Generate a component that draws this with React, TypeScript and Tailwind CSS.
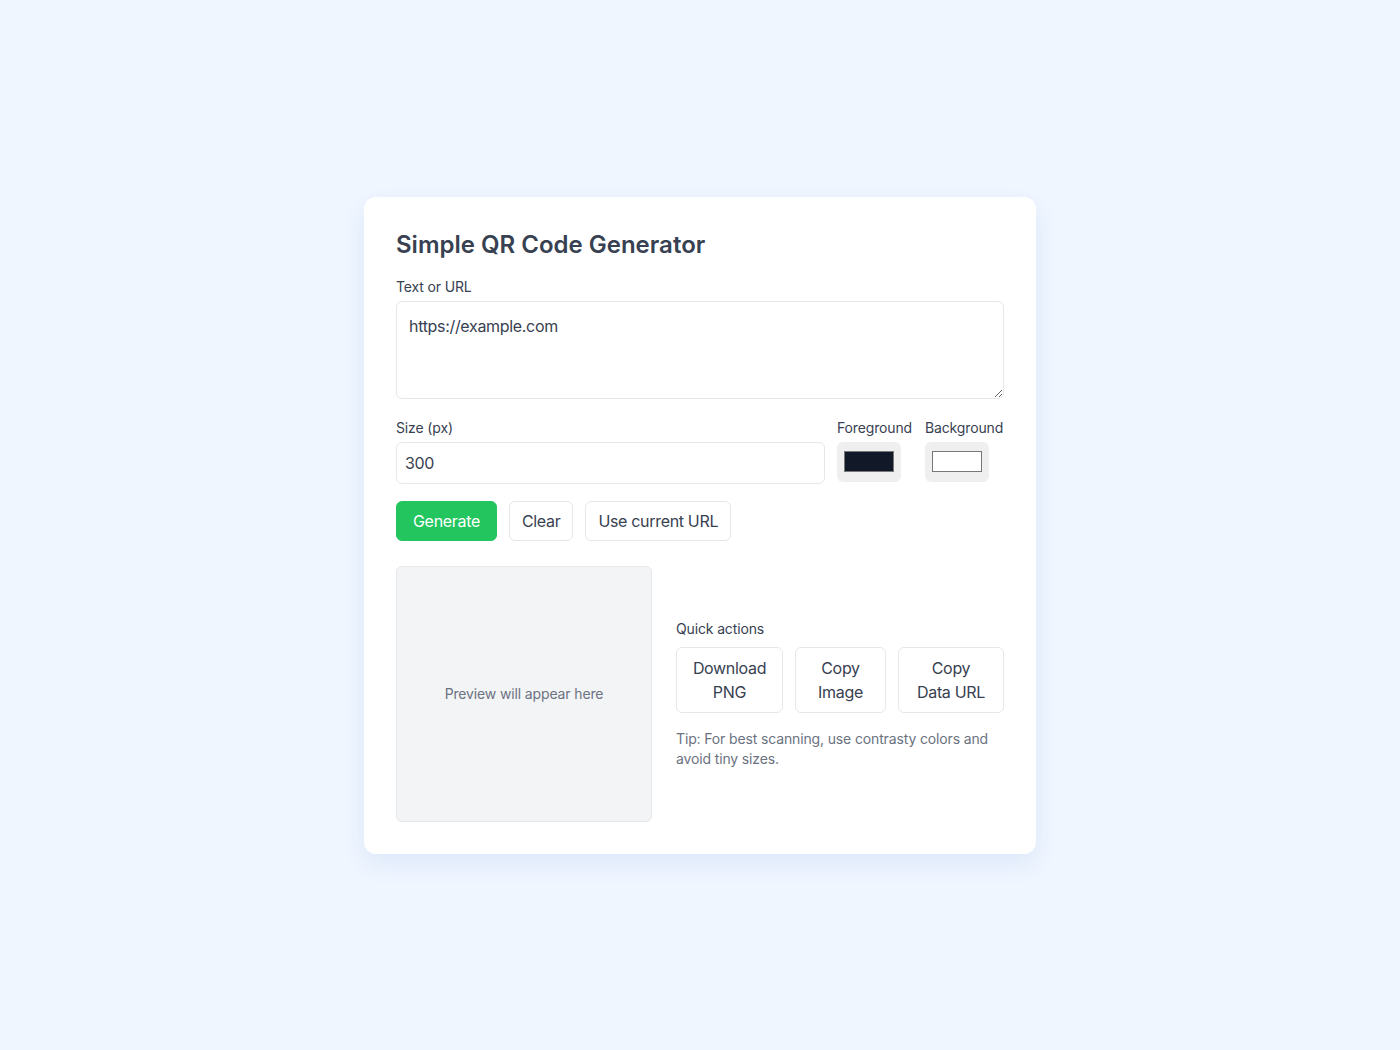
const App = () => {
  return (
    <div
      className="min-h-screen w-full bg-[#eff6ff] flex items-center justify-center tracking-[-0.02em]"
      style={{ fontFamily: "Inter, 'Noto Sans', sans-serif" }}
    >
      <div className="w-[672px] bg-white rounded-xl p-8 shadow-[0_10px_25px_rgba(30,64,175,0.08)]">
        {/* Header */}
        <h1 className="text-2xl leading-8 font-semibold text-[#374151] tracking-normal">
          Simple QR Code Generator
        </h1>

        {/* Text input */}
        <label className="block mt-4 mb-1 text-sm text-[#374151] tracking-[-0.01em]">Text or URL</label>
        <textarea
          rows={3}
          defaultValue="https://example.com"
          className="block w-full h-[98px] px-3 py-3 text-base leading-6 text-[#374151] border border-[#e5e7eb] rounded-md resize-y outline-none"
        />

        {/* Size + colours */}
        <div className="mt-[19px] grid grid-cols-[1fr_76px_79px] gap-3">
          <div>
            <label className="block mb-1 text-sm text-[#374151] tracking-[-0.01em]">Size (px)</label>
            <input
              type="text"
              defaultValue="300"
              className="block w-full h-[42px] px-2 text-base text-[#374151] border border-[#e5e7eb] rounded-md outline-none"
            />
          </div>
          <div>
            <label className="block mb-1 text-sm text-[#374151] tracking-[-0.01em] whitespace-nowrap">Foreground</label>
            <div className="w-16 h-10 rounded-md bg-[#efefef] flex items-center justify-center">
              <div className="w-[50px] h-[21px] bg-[#111827] border border-[#777]" />
            </div>
          </div>
          <div>
            <label className="block mb-1 text-sm text-[#374151] tracking-[-0.01em] whitespace-nowrap">Background</label>
            <div className="w-16 h-10 rounded-md bg-[#efefef] flex items-center justify-center">
              <div className="w-[50px] h-[21px] bg-white border border-[#777]" />
            </div>
          </div>
        </div>

        {/* Buttons */}
        <div className="mt-[17px] flex gap-3">
          <button className="h-10 px-4 rounded-md bg-[#22c55e] border border-[#22c55e] text-white text-base">
            Generate
          </button>
          <button className="h-10 px-3 rounded-md bg-white border border-[#e5e7eb] text-[#374151] text-base">
            Clear
          </button>
          <button className="h-10 px-3 rounded-md bg-white border border-[#e5e7eb] text-[#374151] text-base">
            Use current URL
          </button>
        </div>

        {/* Preview + actions */}
        <div className="mt-[25px] flex items-center gap-6">
          <div className="w-64 h-64 shrink-0 rounded-md bg-[#f3f4f6] border border-[#e5e7eb] flex items-center justify-center text-sm text-[#6b7280] tracking-[-0.01em]">
            Preview will appear here
          </div>
          <div className="flex-1">
            <div className="mb-2 text-sm text-[#374151] tracking-[-0.01em]">Quick actions</div>
            <div className="grid grid-cols-[107px_91px_106px] gap-3">
              <button className="py-2 px-2 rounded-md bg-white border border-[#e5e7eb] text-[#374151] text-base leading-6">
                Download
                <br />
                PNG
              </button>
              <button className="py-2 px-2 rounded-md bg-white border border-[#e5e7eb] text-[#374151] text-base leading-6">
                Copy
                <br />
                Image
              </button>
              <button className="py-2 px-2 rounded-md bg-white border border-[#e5e7eb] text-[#374151] text-base leading-6">
                Copy
                <br />
                Data URL
              </button>
            </div>
            <p className="mt-4 text-sm leading-5 text-[#6b7280] tracking-[-0.01em]">
              Tip: For best scanning, use contrasty colors and avoid tiny sizes.
            </p>
          </div>
        </div>
      </div>
    </div>
  );
};

export default App;
